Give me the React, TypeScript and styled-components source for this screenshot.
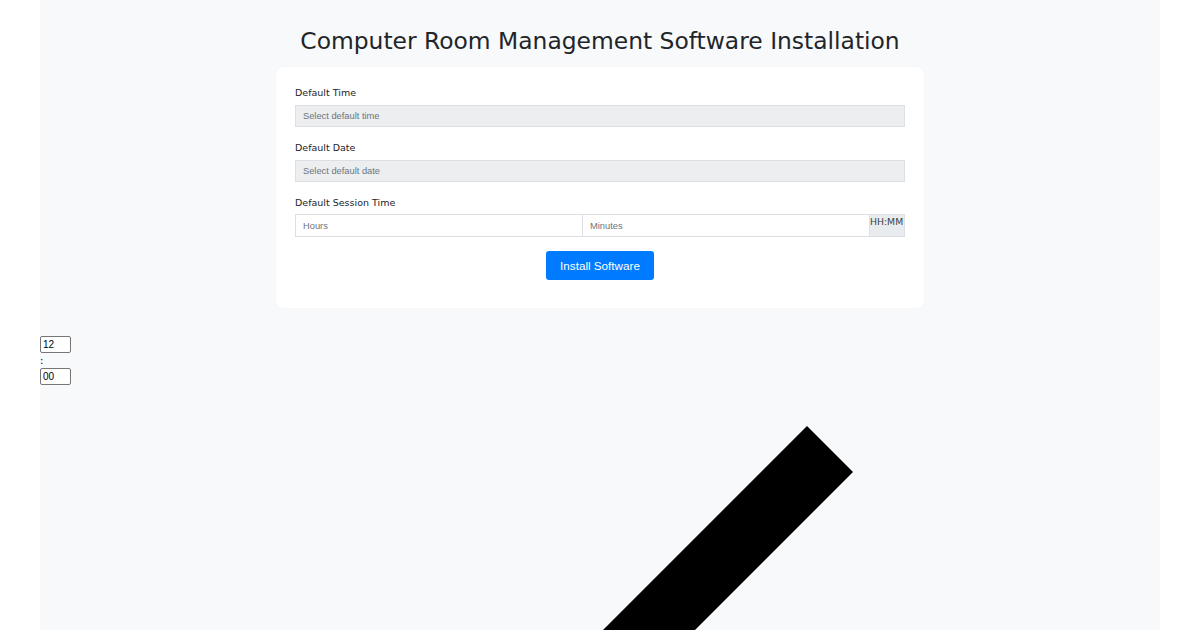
import React, { useState } from 'react';
import styled, { createGlobalStyle } from 'styled-components';

const GlobalStyle = createGlobalStyle`
  html, body {
    margin: 0;
    padding: 0;
    background: #ffffff;
    overflow: hidden;
  }
  body {
    font-family: "DejaVu Sans", sans-serif;
    color: #212529;
  }
`;

const Page = styled.div`
  max-width: 1120px;
  margin: 0 auto;
  min-height: 630px;
  background: #f8f9fa;
  padding-top: 26px;
  box-sizing: border-box;
`;

const Title = styled.h1`
  margin: 0 0 11px;
  text-align: center;
  font-size: 23.4px;
  font-weight: 400;
  line-height: 30px;
  color: #212529;
`;

const Card = styled.div`
  width: 648px;
  margin: 0 auto;
  background: #ffffff;
  border-radius: 8px;
  padding: 19px 19px 28px;
  box-sizing: border-box;
  box-shadow: 0 0 2px rgba(0, 0, 0, 0.03);
`;

const Field = styled.div`
  margin-bottom: 14px;
`;

const Label = styled.label<{ $tight?: boolean }>`
  display: block;
  font-size: 9.5px;
  line-height: 12px;
  padding-top: 1px;
  margin-bottom: ${(p) => (p.$tight ? '5px' : '6px')};
  color: #212529;
`;

const Input = styled.input<{ $readOnlyLook?: boolean }>`
  display: block;
  width: 100%;
  box-sizing: border-box;
  height: 22px;
  padding: 0 7px;
  border: 1px solid #dcdfe3;
  border-radius: 0;
  font-family: "Liberation Sans", Arial, sans-serif;
  font-size: 9.3px;
  color: #495057;
  background: ${(p) => (p.$readOnlyLook ? '#eceef0' : '#ffffff')};
  outline: none;
  &::placeholder {
    color: #6c757d;
  }
`;

const Group = styled.div`
  display: flex;
  height: 23px;
`;

const GroupInput = styled(Input)`
  flex: 1;
  height: 23px;
  width: auto;
  min-width: 0;
  & + & {
    margin-left: -1px;
  }
`;

const Addon = styled.span`
  width: 35px;
  box-sizing: border-box;
  border: 1px solid #dcdfe3;
  border-left: none;
  background: #e9ecef;
  font-size: 9.3px;
  font-weight: 400;
  line-height: 12px;
  padding-top: 1px;
  text-align: left;
  color: #3a3f44;
`;

const Actions = styled.div`
  display: flex;
  justify-content: center;
`;

const Button = styled.button`
  width: 108px;
  height: 29px;
  border: none;
  border-radius: 3px;
  background: #007bff;
  color: #ffffff;
  font-family: "Liberation Sans", Arial, sans-serif;
  font-size: 11.7px;
  cursor: pointer;
`;

const Picker = styled.div`
  display: flex;
  flex-direction: column;
  align-items: flex-start;
  margin-top: 28px;
`;

const PickerInput = styled.input`
  width: 31px;
  height: 17px;
  box-sizing: border-box;
  padding: 0 2px;
  border: 1px solid #767676;
  border-radius: 2px;
  font-family: "Liberation Sans", Arial, sans-serif;
  font-size: 10px;
  background: #ffffff;
  color: #000;
`;

const Colon = styled.span`
  font-size: 10px;
  line-height: 15px;
  color: #000;
`;

const Glyph = styled.svg`
  display: block;
  margin-top: 5px;
`;

export default function App() {
  const [hh, setHh] = useState('12');
  const [mm, setMm] = useState('00');

  return (
    <>
      <GlobalStyle />
      <Page>
        <Title>Computer Room Management Software Installation</Title>
        <Card>
          <Field>
            <Label>Default Time</Label>
            <Input $readOnlyLook readOnly placeholder="Select default time" />
          </Field>
          <Field>
            <Label>Default Date</Label>
            <Input $readOnlyLook readOnly placeholder="Select default date" />
          </Field>
          <Field>
            <Label $tight>Default Session Time</Label>
            <Group>
              <GroupInput placeholder="Hours" />
              <GroupInput placeholder="Minutes" />
              <Addon>HH:MM</Addon>
            </Group>
          </Field>
          <Actions>
            <Button>Install Software</Button>
          </Actions>
        </Card>
        <Picker>
          <PickerInput value={hh} onChange={(e) => setHh(e.target.value)} />
          <Colon>:</Colon>
          <PickerInput value={mm} onChange={(e) => setMm(e.target.value)} />
        </Picker>
        <Glyph width="1120" height="300" viewBox="0 0 1120 300">
          <polygon points="767,36 813,82 413,482 367,436" fill="#000" />
        </Glyph>
      </Page>
    </>
  );
}
